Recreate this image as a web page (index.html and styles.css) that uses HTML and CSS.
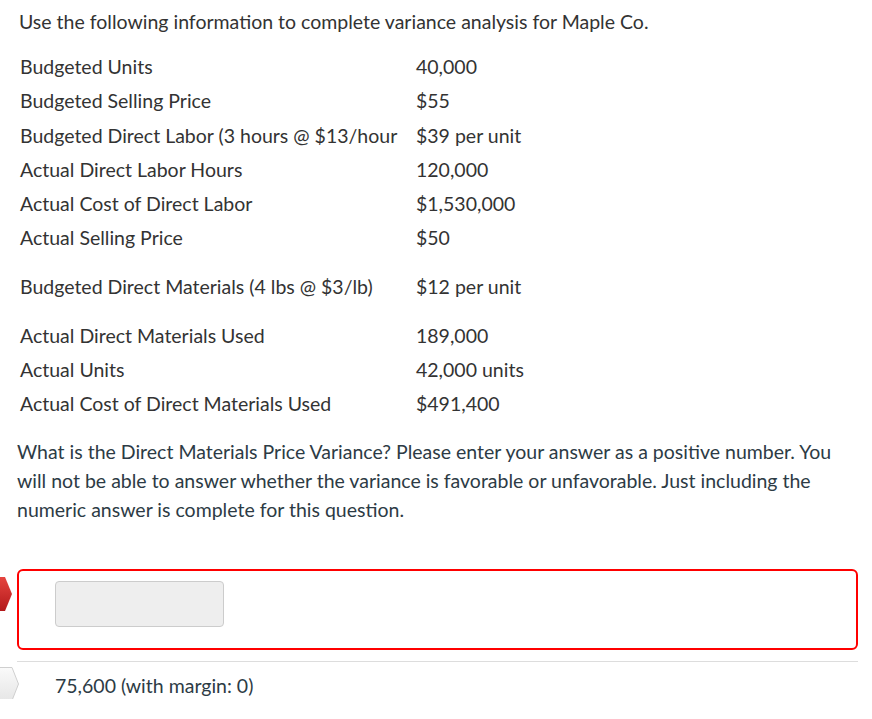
FILE: index.html
```html
<!DOCTYPE html>
<html lang="en">
<head>
      <meta charset="UTF-8">
      <meta name="viewport" content="width=device-width, initial-scale=1.0">
      <title>Maple Co. variance analysis</title>
      <link rel="stylesheet" href="styles.css">
</head>
<body>
      <div class="question">
            <p class="intro">Use the following information to complete variance analysis for Maple Co.</p>

            <div class="data">
                  <div class="data-row"><span>Budgeted Units</span><span>40,000</span></div>
                  <div class="data-row"><span>Budgeted Selling Price</span><span>$55</span></div>
                  <div class="data-row"><span>Budgeted Direct Labor (3 hours @ $13/hour</span><span>$39 per unit</span></div>
                  <div class="data-row"><span>Actual Direct Labor Hours</span><span>120,000</span></div>
                  <div class="data-row"><span>Actual Cost of Direct Labor</span><span>$1,530,000</span></div>
                  <div class="data-row"><span>Actual Selling Price</span><span>$50</span></div>
                  <div class="data-row spaced"><span>Budgeted Direct Materials (4 lbs @ $3/lb)</span><span>$12 per unit</span></div>
                  <div class="data-row"><span>Actual Direct Materials Used</span><span>189,000</span></div>
                  <div class="data-row"><span>Actual Units</span><span>42,000 units</span></div>
                  <div class="data-row"><span>Actual Cost of Direct Materials Used</span><span>$491,400</span></div>
            </div>

            <p class="prompt">What is the Direct Materials Price Variance? Please enter your answer as a positive number. You will not be able to answer whether the variance is favorable or unfavorable. Just including the numeric answer is complete for this question.</p>

            <div class="answer answer-wrong">
                  <svg class="arrow" width="20" height="34" viewBox="0 0 20 34">
                        <defs>
                              <linearGradient id="redFill" x1="0" y1="0" x2="0" y2="1">
                                    <stop offset="0" stop-color="#e6453f"/>
                                    <stop offset="1" stop-color="#b3191b"/>
                              </linearGradient>
                        </defs>
                        <polygon points="0,0 12,0 19,17 12,34 0,34" fill="url(#redFill)"/>
                  </svg>
                  <input class="answer-input" type="text" aria-label="Your answer">
            </div>

            <div class="answer answer-correct">
                  <svg class="arrow" width="20" height="34" viewBox="0 0 20 34">
                        <defs>
                              <linearGradient id="grayFill" x1="0" y1="0" x2="0" y2="1">
                                    <stop offset="0" stop-color="#fafafa"/>
                                    <stop offset="1" stop-color="#e6e6e6"/>
                              </linearGradient>
                        </defs>
                        <polygon points="-1,0.5 12,0.5 18.5,17 12,33.5 -1,33.5" fill="url(#grayFill)" stroke="#cfcfcf" stroke-width="1"/>
                  </svg>
                  <span class="answer-text">75,600 (with margin: 0)</span>
            </div>
      </div>
</body>
</html>
```

FILE: styles.css
```css
*{
      box-sizing: border-box;
}

body{
      margin: 0;
      background: #fff;
      font-family: Lato, "Open Sans", sans-serif;
      font-size: 19.5px;
      color: #333;
}

.question{
      width: 858px;
      padding: 8px 0 0 17px;
}

.intro{
      margin: 0 0 14px 2px;
      line-height: 28px;
}

.data{
      margin-left: 3px;
}
.data-row{
      display: grid;
      grid-template-columns: 396px 1fr;
      padding: 4px 0;
      line-height: 26.25px;
}
.data-row.spaced{
      margin: 14.5px 0;
}

.prompt{
      margin: 15px 0 0 0;
      line-height: 29px;
      color: #2d3b45;
}

.answer{
      position: relative;
}
.answer .arrow{
      position: absolute;
      display: block;
}

.answer-wrong{
      margin-top: 45.5px;
      border: 2px solid #f00;
      border-radius: 6px;
      padding: 10px 0 21px 36px;
}
.answer-wrong .arrow{
      left: -26px;
      top: 6px;
}
.answer-input{
      display: block;
      width: 169px;
      height: 46px;
      margin: 0;
      background: #eee;
      border: 1px solid #ccc;
      border-radius: 4px;
}

.answer-correct{
      margin-top: 11px;
      border-top: 1px solid #ddd;
      padding: 9.5px 0 0 38px;
      line-height: 27px;
      color: #2d3b45;
}
.answer-correct .arrow{
      left: -17px;
      top: 5px;
}
```
